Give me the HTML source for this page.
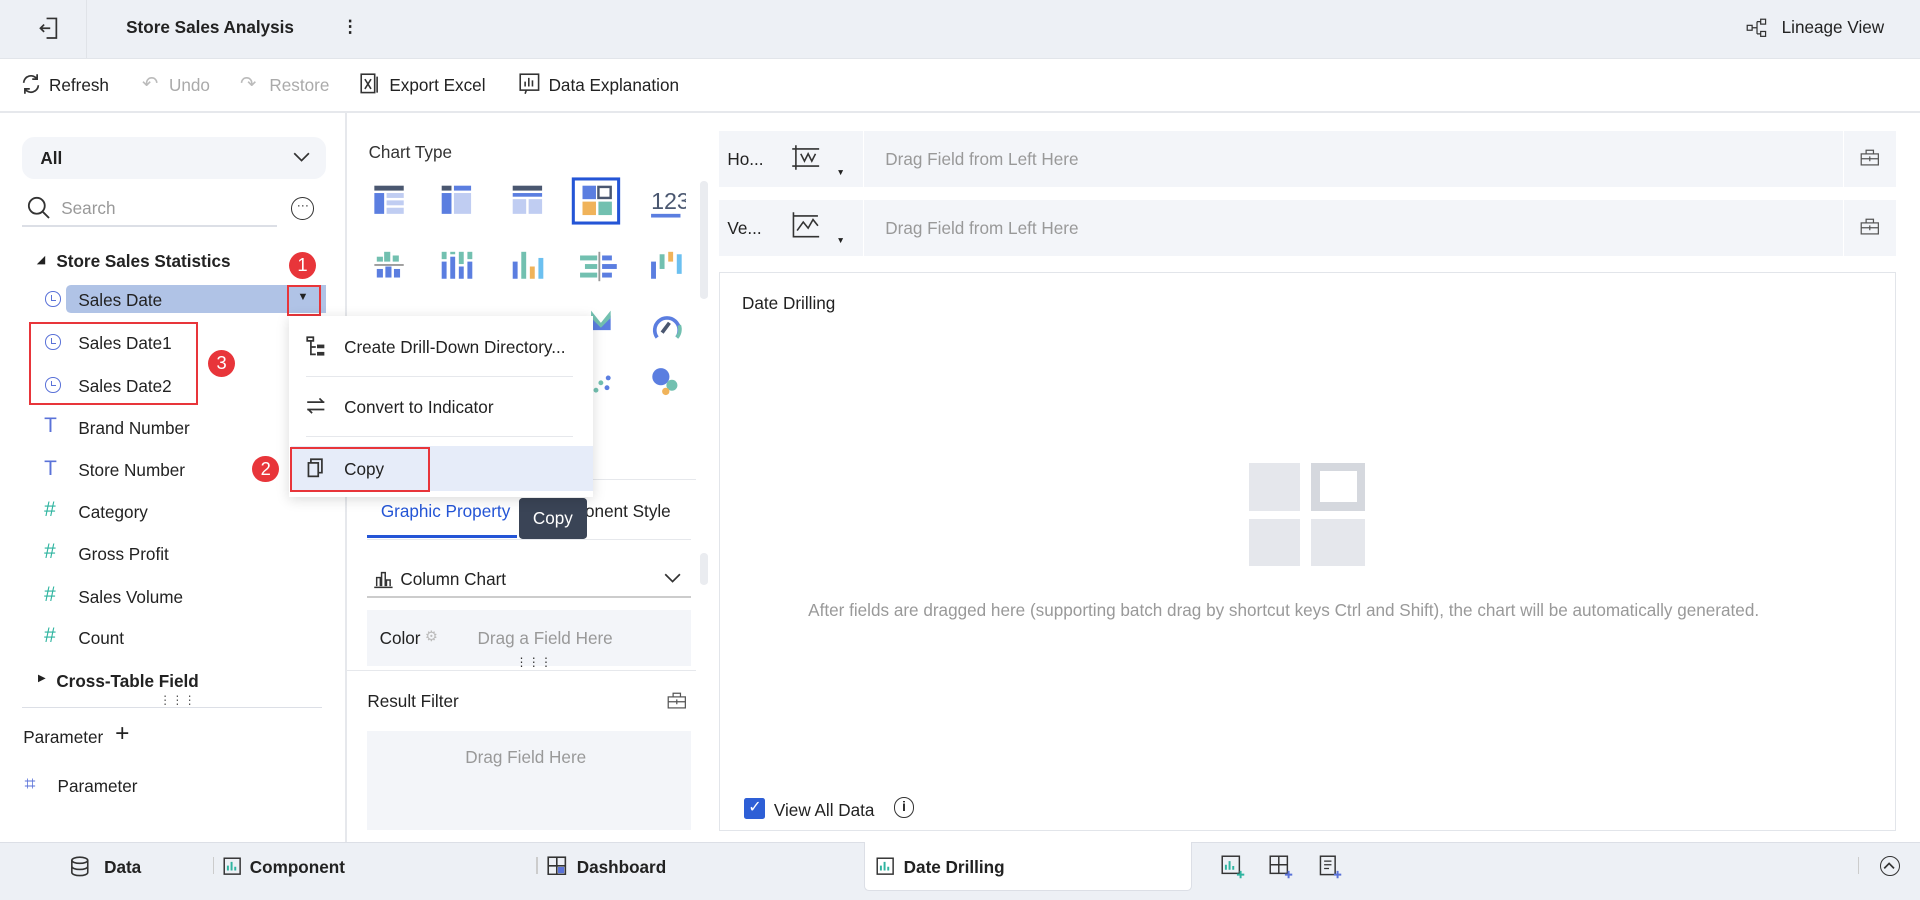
<!DOCTYPE html>
<html><head><meta charset="utf-8"><style>
html,body{margin:0;padding:0;}
body{width:1568px;height:734px;zoom:1.2244898;font-family:"Liberation Sans",sans-serif;color:#222;background:#fff;position:relative;overflow:hidden;font-size:14px;}
.a{position:absolute;}
.t{position:absolute;white-space:nowrap;}
.ico{position:absolute;}
.redbox{position:absolute;border:2px solid #e8353a;box-sizing:border-box;}
.badge{position:absolute;width:22px;height:22px;border-radius:50%;background:#e8353a;color:#fff;font-size:15px;text-align:center;line-height:22px;}
.fld{position:absolute;left:35px;font-size:14px;color:#222;}
.clock{position:absolute;left:37px;width:11px;height:11px;border:1.5px solid #5a72d8;border-radius:50%;}
.clock:after{content:"";position:absolute;left:4px;top:2px;width:3px;height:4px;border-left:1.5px solid #5a72d8;border-bottom:1.5px solid #5a72d8;}
.tt{position:absolute;left:36px;font-size:17px;color:#5a72d8;font-weight:normal;}
.hash{position:absolute;left:36px;font-size:17px;color:#2fb4a0;}
</style></head><body>
<!-- top bar -->
<div class="a" style="left:0;top:0;width:1568px;height:47px;background:#edf0f5;border-bottom:1px solid #e2e5ea;"></div>
<div class="a" style="left:70px;top:0;width:1px;height:47px;background:#e0e3e8;"></div>
<svg class="ico" style="left:31px;top:13px" width="18" height="20" viewBox="0 0 18 20"><path d="M7 2h8v16H7M2 10h8M5 7l-3 3 3 3" fill="none" stroke="#333" stroke-width="1.4"/></svg>
<div class="t" style="left:103px;top:14px;font-weight:bold;font-size:14px;">Store Sales Analysis</div>
<div class="t" style="left:279px;top:13px;font-weight:bold;">⋮</div>
<svg class="ico" style="left:1426px;top:15px" width="18" height="16" viewBox="0 0 18 16"><rect x="1" y="6" width="4" height="4" fill="none" stroke="#333"/><rect x="12" y="1" width="4" height="4" fill="none" stroke="#333"/><rect x="12" y="11" width="4" height="4" fill="none" stroke="#333"/><path d="M5 8h4M9 3v10M9 3h3M9 13h3" stroke="#333" fill="none"/></svg>
<div class="t" style="left:1455px;top:14px;font-size:14px;">Lineage View</div>
<!-- toolbar -->
<div class="a" style="left:0;top:91px;width:1568px;height:1px;background:#e6e8ec;"></div>
<svg class="ico" style="left:16px;top:60px" width="18" height="18" viewBox="0 0 18 18"><path d="M3 8a6 6 0 0 1 11-3M15 10a6 6 0 0 1-11 3M14 1v4h-4M4 17v-4h4" fill="none" stroke="#333" stroke-width="1.4"/></svg>
<div class="t" style="left:40px;top:61px;">Refresh</div>
<div class="t" style="left:116px;top:59px;color:#bbb;font-size:16px;">↶</div><div class="t" style="left:138px;top:61px;color:#aaa;">Undo</div>
<div class="t" style="left:196px;top:59px;color:#bbb;font-size:16px;">↷</div><div class="t" style="left:220px;top:61px;color:#aaa;">Restore</div>
<svg class="ico" style="left:294px;top:60px" width="16" height="18" viewBox="0 0 16 18"><rect x="1" y="1" width="11" height="15" fill="none" stroke="#333" stroke-width="1.3"/><path d="M4 5l5 8M9 5l-5 8M14 3v13" stroke="#333" fill="none" stroke-width="1.3"/></svg>
<div class="t" style="left:318px;top:61px;">Export Excel</div>
<svg class="ico" style="left:424px;top:60px" width="17" height="18" viewBox="0 0 17 18"><rect x="1" y="1" width="15" height="13" fill="none" stroke="#333" stroke-width="1.3"/><path d="M5 11V7M8 11V4M11 11V6M6 14l-1 3" stroke="#333" fill="none" stroke-width="1.3"/></svg>
<div class="t" style="left:448px;top:61px;">Data Explanation</div>
<!-- left panel -->
<div class="a" style="left:282px;top:92px;width:1px;height:596px;background:#e6e8ec;"></div>
<div class="a" style="left:18px;top:112px;width:248px;height:34px;border-radius:10px;background:#f3f5f9;"></div>
<div class="t" style="left:33px;top:121px;font-weight:bold;">All</div>
<svg class="ico" style="left:239px;top:124px" width="14" height="9" viewBox="0 0 14 9"><path d="M1 1l6 6 6-6" fill="none" stroke="#333" stroke-width="1.4"/></svg>
<svg class="ico" style="left:22px;top:160px" width="20" height="20" viewBox="0 0 20 20"><circle cx="8" cy="8" r="6.5" fill="none" stroke="#333" stroke-width="1.5"/><path d="M13 13l5 5" stroke="#333" stroke-width="1.5"/></svg>
<div class="t" style="left:50px;top:162px;color:#999;">Search</div>
<div class="a" style="left:18px;top:184px;width:208px;height:1px;background:#dcdfe6;"></div>
<div class="a" style="left:238px;top:161px;width:17px;height:17px;border:1.3px solid #333;border-radius:50%;text-align:center;font-size:10px;line-height:12px;">···</div>
<div class="t" style="left:30px;top:207px;font-size:9px;">◢</div>
<div class="t" style="left:46px;top:205px;font-weight:bold;">Store Sales Statistics</div>
<div class="badge" style="left:236px;top:206px;">1</div>
<div class="a" style="left:54px;top:233px;width:212px;height:23px;background:#b0c3e6;border-radius:4px 0 0 4px;"></div>
<div class="clock" style="top:238px;"></div>
<div class="t" style="left:64px;top:237px;">Sales Date</div>
<div class="redbox" style="left:234px;top:233px;width:28px;height:25px;"></div>
<div class="t" style="left:243px;top:238px;font-size:9px;">▼</div>
<div class="redbox" style="left:24px;top:263px;width:138px;height:68px;"></div>
<div class="clock" style="top:273px;"></div><div class="t" style="left:64px;top:272px;">Sales Date1</div>
<div class="clock" style="top:308px;"></div><div class="t" style="left:64px;top:307px;">Sales Date2</div>
<div class="badge" style="left:170px;top:286px;">3</div>
<div class="tt" style="top:338px;">T</div><div class="t" style="left:64px;top:341px;">Brand Number</div>
<div class="tt" style="top:373px;">T</div><div class="t" style="left:64px;top:376px;">Store Number</div>
<div class="hash" style="top:407px;">#</div><div class="t" style="left:64px;top:410px;">Category</div>
<div class="hash" style="top:441px;">#</div><div class="t" style="left:64px;top:444px;">Gross Profit</div>
<div class="hash" style="top:476px;">#</div><div class="t" style="left:64px;top:479px;">Sales Volume</div>
<div class="hash" style="top:510px;">#</div><div class="t" style="left:64px;top:513px;">Count</div>
<div class="t" style="left:31px;top:550px;font-size:8px;">▶</div>
<div class="t" style="left:46px;top:548px;font-weight:bold;">Cross-Table Field</div>
<div class="a" style="left:18px;top:577px;width:245px;height:1px;background:#dcdfe6;"></div>
<div class="t" style="left:130px;top:566px;font-size:10px;color:#555;">⋮⋮⋮</div>
<div class="t" style="left:19px;top:594px;">Parameter</div><div class="t" style="left:94px;top:588px;font-size:20px;">+</div>
<div class="t" style="left:20px;top:631px;color:#5a72d8;font-size:16px;">⌗</div><div class="t" style="left:47px;top:634px;">Parameter</div>
<!-- middle panel -->
<div class="t" style="left:301px;top:116px;color:#333;">Chart Type</div>
<div class="a" style="left:572px;top:148px;width:6px;height:96px;background:#eaecf0;border-radius:3px;"></div>
<svg class="a" style="left:300px;top:140px" width="260" height="200" viewBox="0 0 260 200">
<g transform="translate(6,12)"><rect width="24" height="4" fill="#4a5770"/><rect y="6" width="8" height="17" fill="#5b7ee0"/><rect x="10" y="6" width="14" height="4" fill="#c0cdf2"/><rect x="10" y="12" width="14" height="4" fill="#c0cdf2"/><rect x="10" y="18" width="14" height="5" fill="#c0cdf2"/></g>
<g transform="translate(61,12)"><rect width="8" height="4" fill="#4a5770"/><rect x="10" width="14" height="4" fill="#5b7ee0"/><rect y="6" width="8" height="17" fill="#5b7ee0"/><rect x="10" y="6" width="14" height="17" fill="#c0cdf2"/></g>
<g transform="translate(119,12)"><rect width="24" height="4" fill="#4a5770"/><rect y="6" width="24" height="3" fill="#5b7ee0"/><rect y="11" width="11" height="12" fill="#c0cdf2"/><rect x="13" y="11" width="11" height="12" fill="#c0cdf2"/></g>
<rect x="168.5" y="6.5" width="37" height="36" fill="none" stroke="#2455d6" stroke-width="2.5"/>
<g transform="translate(176,12)"><rect width="11" height="11" fill="#5b7ee0"/><rect x="13" y="1" width="10" height="9" fill="none" stroke="#4a5770" stroke-width="2"/><rect y="13" width="11" height="11" fill="#f0b35a"/><rect x="13" y="13" width="11" height="11" fill="#72c0b0"/></g>
<text x="232" y="31" font-size="19" fill="#4a5770" font-family="Liberation Sans">123</text><rect x="232" y="35" width="24" height="3" fill="#5b7ee0"/>
<g transform="translate(6,66)"><rect x="8" y="0" width="5" height="8" fill="#72c0b0"/><rect x="2" y="4" width="5" height="4" fill="#72c0b0"/><rect x="15" y="3" width="5" height="5" fill="#72c0b0"/><rect y="10" width="24" height="1.5" fill="#999"/><rect x="2" y="14" width="5" height="7" fill="#5b7ee0"/><rect x="9" y="12" width="5" height="9" fill="#5b7ee0"/><rect x="16" y="14" width="5" height="7" fill="#5b7ee0"/></g>
<g transform="translate(61,66)"><rect x="0" y="8" width="4" height="14" fill="#5b7ee0"/><rect x="0" y="0" width="4" height="6" fill="#72c0b0"/><rect x="7" y="4" width="4" height="18" fill="#5b7ee0"/><rect x="7" y="0" width="4" height="2" fill="#72c0b0"/><rect x="14" y="12" width="4" height="10" fill="#5b7ee0"/><rect x="14" y="0" width="4" height="10" fill="#72c0b0"/><rect x="21" y="8" width="4" height="14" fill="#5b7ee0"/><rect x="21" y="0" width="4" height="6" fill="#72c0b0"/></g>
<g transform="translate(119,66)"><rect x="0" y="8" width="4" height="14" fill="#5b7ee0"/><rect x="7" y="0" width="4" height="22" fill="#72c0b0"/><rect x="14" y="12" width="4" height="10" fill="#f0b35a"/><rect x="21" y="5" width="4" height="17" fill="#6cc0f0"/></g>
<g transform="translate(174,66)"><rect x="0" y="3" width="14" height="4" fill="#72c0b0"/><rect x="4" y="10" width="10" height="4" fill="#72c0b0"/><rect x="0" y="17" width="14" height="4" fill="#72c0b0"/><rect x="15" y="0" width="1.5" height="24" fill="#999"/><rect x="18" y="3" width="8" height="4" fill="#5b7ee0"/><rect x="18" y="10" width="12" height="4" fill="#5b7ee0"/><rect x="18" y="17" width="8" height="4" fill="#5b7ee0"/></g>
<g transform="translate(232,66)"><rect x="0" y="8" width="4" height="14" fill="#5b7ee0"/><rect x="7" y="2" width="4" height="12" fill="#72c0b0"/><rect x="14" y="0" width="4" height="8" fill="#f0b35a"/><rect x="21" y="2" width="4" height="16" fill="#6cc0f0"/></g>
<path d="M183 118l8 8 8-8v12h-16z" fill="#5b7ee0"/><path d="M183 114l8 10 8-10v6l-8 8-8-8z" fill="#72c0b0"/>
<path d="M237 136a10 10 0 1 1 16 0" fill="none" stroke="#5b7ee0" stroke-width="3"/><path d="M253 136a10 10 0 0 0 2-10" fill="none" stroke="#72c0b0" stroke-width="3"/><path d="M241 132l6-8" stroke="#4a5770" stroke-width="3"/>
<circle cx="240" cy="168" r="7" fill="#5b7ee0"/><circle cx="249" cy="175" r="4.5" fill="#72c0b0"/><circle cx="244" cy="180" r="3" fill="#f0b35a"/>
<circle cx="197" cy="169" r="2" fill="#5b7ee0"/><circle cx="191" cy="173" r="2" fill="#72c0b0"/><circle cx="187" cy="179" r="2" fill="#72c0b0"/><circle cx="196" cy="177" r="2" fill="#5b7ee0"/>
</svg>
<div class="a" style="left:282px;top:391px;width:286px;height:1px;background:#e6e8ec;"></div>
<div class="t" style="left:311px;top:409px;color:#2455d6;">Graphic Property</div>
<div class="a" style="left:300px;top:437px;width:122px;height:2px;background:#2455d6;"></div>
<div class="t" style="left:470px;top:409px;">ponent Style</div>
<div class="a" style="left:300px;top:440px;width:264px;height:1px;background:#e6e8ec;"></div>
<div class="a" style="left:424px;top:407px;width:55px;height:33px;background:#3a4456;border-radius:3px;color:#fff;text-align:center;line-height:33px;font-size:14px;">Copy</div>
<div class="a" style="left:572px;top:452px;width:6px;height:26px;background:#eaecf0;border-radius:3px;"></div>
<svg class="ico" style="left:305px;top:465px" width="17" height="16" viewBox="0 0 17 16"><path d="M1 15h15M3 14V7h3v7M7 14V3h3v11M11 14V9h3v5" fill="none" stroke="#333" stroke-width="1.2"/></svg>
<div class="t" style="left:327px;top:465px;">Column Chart</div>
<svg class="ico" style="left:542px;top:468px" width="14" height="9" viewBox="0 0 14 9"><path d="M1 1l6 6 6-6" fill="none" stroke="#333" stroke-width="1.4"/></svg>
<div class="a" style="left:300px;top:487px;width:264px;height:1px;background:#ccc;"></div>
<div class="a" style="left:300px;top:498px;width:264px;height:46px;background:#f3f5f9;"></div>
<div class="t" style="left:310px;top:513px;">Color</div><div class="t" style="left:347px;top:513px;color:#bbb;font-size:12px;">⚙</div>
<div class="t" style="left:390px;top:513px;color:#999;">Drag a Field Here</div>
<div class="a" style="left:282px;top:547px;width:286px;height:1px;background:#e6e8ec;"></div>
<div class="t" style="left:421px;top:535px;font-size:10px;color:#333;">⋮⋮⋮</div>
<div class="t" style="left:300px;top:564px;">Result Filter</div>
<svg class="ico" style="left:545px;top:565px" width="16" height="14" viewBox="0 0 16 14"><rect x="1" y="4" width="14" height="9" fill="none" stroke="#555"/><path d="M5 4V1h6v3M1 8h14M8 6v4" fill="none" stroke="#555"/></svg>
<div class="a" style="left:300px;top:597px;width:264px;height:81px;background:#f3f5f9;"></div>
<div class="t" style="left:380px;top:610px;color:#999;">Drag Field Here</div>
<!-- right area -->
<div class="a" style="left:587px;top:107px;width:961px;height:46px;background:#f3f5f9;"></div>
<div class="a" style="left:705px;top:107px;width:1px;height:46px;background:#fff;"></div>
<div class="a" style="left:1505px;top:107px;width:1px;height:46px;background:#fff;"></div>
<div class="t" style="left:594px;top:122px;">Ho...</div>
<svg class="ico" style="left:646px;top:118px" width="24" height="22" viewBox="0 0 24 22"><path d="M4 1v20M1 4h22M1 18h22M8 8l3 6 3-6 3 6 3-6" fill="none" stroke="#333" stroke-width="1.3"/></svg>
<div class="t" style="left:683px;top:136px;font-size:7px;">▼</div>
<div class="t" style="left:723px;top:122px;color:#999;">Drag Field from Left Here</div>
<svg class="ico" style="left:1519px;top:122px" width="16" height="14" viewBox="0 0 16 14"><rect x="1" y="4" width="14" height="9" fill="none" stroke="#555"/><path d="M5 4V1h6v3M1 8h14M8 6v4" fill="none" stroke="#555"/></svg>
<div class="a" style="left:587px;top:163px;width:961px;height:46px;background:#f3f5f9;"></div>
<div class="a" style="left:705px;top:163px;width:1px;height:46px;background:#fff;"></div>
<div class="a" style="left:1505px;top:163px;width:1px;height:46px;background:#fff;"></div>
<div class="t" style="left:594px;top:178px;">Ve...</div>
<svg class="ico" style="left:646px;top:172px" width="24" height="22" viewBox="0 0 24 22"><path d="M2 1v20h21M2 4h20M5 16l5-7 4 5 4-7 4 5" fill="none" stroke="#333" stroke-width="1.3"/></svg>
<div class="t" style="left:683px;top:192px;font-size:7px;">▼</div>
<div class="t" style="left:723px;top:178px;color:#999;">Drag Field from Left Here</div>
<svg class="ico" style="left:1519px;top:178px" width="16" height="14" viewBox="0 0 16 14"><rect x="1" y="4" width="14" height="9" fill="none" stroke="#555"/><path d="M5 4V1h6v3M1 8h14M8 6v4" fill="none" stroke="#555"/></svg>
<div class="a" style="left:587px;top:222px;width:960px;height:455px;border:1px solid #e2e5ea;"></div>
<div class="t" style="left:606px;top:239px;">Date Drilling</div>
<div class="a" style="left:1020px;top:378px;width:42px;height:39px;background:#e5e7ec;"></div>
<div class="a" style="left:1071px;top:378px;width:44px;height:39px;background:#d5d8de;"></div>
<div class="a" style="left:1078px;top:385px;width:30px;height:25px;background:#fff;"></div>
<div class="a" style="left:1020px;top:424px;width:42px;height:38px;background:#e5e7ec;"></div>
<div class="a" style="left:1071px;top:424px;width:44px;height:38px;background:#e5e7ec;"></div>
<div class="t" style="left:660px;top:490px;color:#999;">After fields are dragged here (supporting batch drag by shortcut keys Ctrl and Shift), the chart will be automatically generated.</div>
<div class="a" style="left:608px;top:652px;width:17px;height:17px;background:#2e5fd6;border-radius:2px;color:#fff;font-size:13px;text-align:center;line-height:17px;">✓</div>
<div class="t" style="left:632px;top:653px;">View All Data</div>
<div class="a" style="left:730px;top:651px;width:15px;height:15px;border:1.3px solid #333;border-radius:50%;text-align:center;font-size:11px;line-height:15px;font-weight:bold;">i</div>
<!-- dropdown menu -->
<div class="a" style="left:236px;top:258px;width:248px;height:148px;background:#fff;box-shadow:0 2px 10px rgba(0,0,0,0.15);"></div>
<svg class="ico" style="left:250px;top:274px" width="16" height="17" viewBox="0 0 16 17"><path d="M1 1h5v3H1zM4 4v11h4M4 9h4" fill="none" stroke="#333" stroke-width="1.4"/><rect x="9" y="7" width="6" height="3" fill="#333"/><rect x="9" y="13" width="6" height="3" fill="#333"/></svg>
<div class="t" style="left:281px;top:275px;">Create Drill-Down Directory...</div>
<div class="a" style="left:250px;top:307px;width:218px;height:1px;background:#e6e8ec;"></div>
<svg class="ico" style="left:250px;top:323px" width="16" height="16" viewBox="0 0 16 16"><path d="M1 5h14M11 2l3 3M15 11H1M5 14l-3-3" fill="none" stroke="#333" stroke-width="1.4"/></svg>
<div class="t" style="left:281px;top:324px;">Convert to Indicator</div>
<div class="a" style="left:250px;top:356px;width:218px;height:1px;background:#e6e8ec;"></div>
<div class="a" style="left:238px;top:364px;width:246px;height:37px;background:#e6ecf9;"></div>
<svg class="ico" style="left:250px;top:374px" width="16" height="16" viewBox="0 0 16 16"><path d="M4 4V1h9v11h-3" fill="none" stroke="#333" stroke-width="1.4"/><rect x="2" y="4" width="8" height="11" fill="none" stroke="#333" stroke-width="1.4"/></svg>
<div class="t" style="left:281px;top:375px;">Copy</div>
<div class="redbox" style="left:237px;top:365px;width:114px;height:37px;"></div>
<div class="badge" style="left:206px;top:372px;">2</div>
<!-- bottom bar -->
<div class="a" style="left:0;top:688px;width:1568px;height:46px;background:#edf0f5;border-top:1px solid #dcdfe6;"></div>
<div class="a" style="left:706px;top:688px;width:266px;height:39px;background:#fff;border:1px solid #dcdfe6;border-top:none;border-radius:0 0 4px 4px;"></div>
<svg class="ico" style="left:57px;top:699px" width="16" height="17" viewBox="0 0 16 17"><ellipse cx="8" cy="3.5" rx="6.5" ry="2.5" fill="none" stroke="#333" stroke-width="1.3"/><path d="M1.5 3.5v10c0 1.4 3 2.5 6.5 2.5s6.5-1.1 6.5-2.5v-10M1.5 8.5c0 1.4 3 2.5 6.5 2.5s6.5-1.1 6.5-2.5" fill="none" stroke="#333" stroke-width="1.3"/></svg>
<div class="t" style="left:85px;top:700px;font-weight:bold;">Data</div>
<div class="a" style="left:174px;top:700px;width:1px;height:14px;background:#ccc;"></div>
<svg class="ico" style="left:182px;top:700px" width="15" height="15" viewBox="0 0 15 15"><rect x="1" y="1" width="13" height="13" fill="none" stroke="#333" stroke-width="1.2"/><path d="M4 11V7M7 11V4M10 11V8" stroke="#2fb4a0" stroke-width="1.6"/></svg>
<div class="t" style="left:204px;top:700px;font-weight:bold;">Component</div>
<div class="a" style="left:438px;top:700px;width:1px;height:14px;background:#ccc;"></div>
<svg class="ico" style="left:447px;top:699px" width="16" height="16" viewBox="0 0 16 16"><rect x="1" y="1" width="14" height="14" fill="none" stroke="#333" stroke-width="1.3"/><path d="M8 1v14M1 8h14" stroke="#333" stroke-width="1.3"/><rect x="9" y="9" width="5" height="5" fill="#5a72d8"/></svg>
<div class="t" style="left:471px;top:700px;font-weight:bold;">Dashboard</div>
<svg class="ico" style="left:715px;top:700px" width="15" height="15" viewBox="0 0 15 15"><rect x="1" y="1" width="13" height="13" fill="none" stroke="#333" stroke-width="1.2"/><path d="M4 11V7M7 11V4M10 11V8" stroke="#2fb4a0" stroke-width="1.6"/></svg>
<div class="t" style="left:738px;top:700px;font-weight:bold;">Date Drilling</div>
<svg class="ico" style="left:997px;top:698px" width="20" height="20" viewBox="0 0 20 20"><rect x="1" y="1" width="14" height="14" fill="none" stroke="#333" stroke-width="1.2"/><path d="M4 12V8M7 12V5M10 12V9" stroke="#2fb4a0" stroke-width="1.6"/><path d="M16 13v6M13 16h6" stroke="#2fb4a0" stroke-width="1.6"/></svg>
<svg class="ico" style="left:1036px;top:698px" width="20" height="20" viewBox="0 0 20 20"><rect x="1" y="1" width="14" height="14" fill="none" stroke="#333" stroke-width="1.2"/><path d="M8 1v14M1 8h14" stroke="#333" stroke-width="1.2"/><path d="M16 13v6M13 16h6" stroke="#5a72d8" stroke-width="1.6"/></svg>
<svg class="ico" style="left:1076px;top:698px" width="20" height="20" viewBox="0 0 20 20"><rect x="2" y="1" width="12" height="15" fill="none" stroke="#333" stroke-width="1.2"/><path d="M5 5h6M5 8h6M5 11h4" stroke="#333"/><path d="M16 13v6M13 16h6" stroke="#5a72d8" stroke-width="1.6"/></svg>
<div class="a" style="left:1517px;top:700px;width:1px;height:14px;background:#ccc;"></div>
<div class="a" style="left:1535px;top:699px;width:15px;height:15px;border:1.3px solid #333;border-radius:50%;"></div>
<svg class="ico" style="left:1538px;top:703px" width="10" height="8" viewBox="0 0 10 8"><path d="M1 6l4-4 4 4" fill="none" stroke="#333" stroke-width="1.4"/></svg>
</body></html>
